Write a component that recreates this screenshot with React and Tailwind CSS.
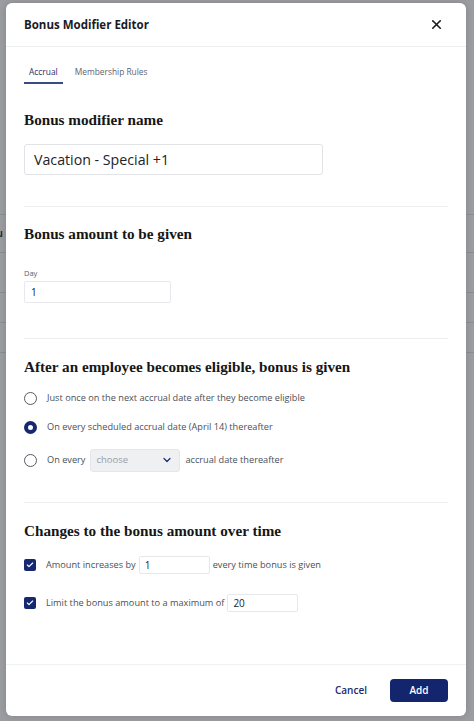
import { X, ChevronDown, Check } from 'lucide-react';

const sans = { fontFamily: '"Open Sans", "Noto Sans", sans-serif' };
const serif = { fontFamily: '"Liberation Serif", "DejaVu Serif", serif' };

function Radio({ checked }) {
  return checked ? (
    <span className="w-[13px] h-[13px] rounded-full border-[4px] border-[#16286f] bg-white shrink-0" />
  ) : (
    <span className="w-[13px] h-[13px] rounded-full border-[1.5px] border-[#555a62] bg-white shrink-0" />
  );
}

function Checkbox() {
  return (
    <span className="w-[12px] h-[12px] rounded-[2px] bg-[#16286f] flex items-center justify-center shrink-0">
      <Check size={8} strokeWidth={3.5} className="text-white" />
    </span>
  );
}

function Heading({ children, className = '' }) {
  return (
    <h2 style={serif} className={`text-[15.2px] leading-[20px] font-bold text-[#161616] ${className}`}>
      {children}
    </h2>
  );
}

export default function App() {
  return (
    <div className="relative w-[474px] h-[721px] bg-[#9b9ca0] overflow-hidden" style={sans}>
      {/* dimmed page behind the dialog */}
      <div className="pt-[214px] flex flex-col">
        <div className="h-[38px] border-t border-[#8c8d92] flex items-center text-[11px] font-semibold text-[#222]">
          <span className="-ml-[4px]">u</span>
        </div>
        <div className="h-[40px] border-t border-[#8c8d92]" />
        <div className="h-[30px] border-t border-[#8c8d92]" />
        <div className="h-[30px] border-t border-[#8c8d92]" />
        <div className="border-t border-[#8c8d92]" />
      </div>

      {/* dialog */}
      <div className="absolute left-[6px] top-[3px] w-[460px] h-[713px] bg-white rounded-[6px] flex flex-col shadow-[0_0_6px_rgba(0,0,0,0.15)]">
        <div className="h-[44px] border-b border-[#eceef0] flex items-center justify-between pl-[18px] pr-[22px]">
          <h1 className="text-[11.5px] font-bold text-[#1b1b1f]">Bonus Modifier Editor</h1>
          <X size={15} strokeWidth={2.6} className="text-[#1b1b1f]" />
        </div>

        <div className="flex-1 px-[18px] flex flex-col">
          <div className="flex gap-[12px] pt-[18px] text-[8.4px] leading-[14px]">
            <div className="px-[5px] pb-[3px] border-b-2 border-[#3a4a85] text-[#1d2b6b] font-medium">Accrual</div>
            <div className="pb-[3px] text-[#5f6570] font-medium">Membership Rules</div>
          </div>

          <Heading className="mt-[26px]">Bonus modifier name</Heading>
          <div className="mt-[14px] w-[299px] h-[31px] border border-[#e1e3e6] rounded-[3px] flex items-center px-[9px] text-[14.2px] text-[#222327]">
            Vacation - Special +1
          </div>

          <div className="mt-[31px] border-t border-[#ebedef]" />

          <Heading className="mt-[17px]">Bonus amount to be given</Heading>
          <div className="mt-[24px] text-[7.5px] leading-[10px] text-[#5a5f68]">Day</div>
          <div className="mt-[3px] w-[147px] h-[22px] border border-[#e6e8eb] rounded-[2px] flex items-center px-[6px] text-[10px] text-[#222327]">
            1
          </div>

          <div className="mt-[35px] border-t border-[#ebedef]" />

          <Heading className="mt-[18px]">After an employee becomes eligible, bonus is given</Heading>
          <div className="mt-[13px] h-[16px] flex items-center gap-[10px] text-[9.2px] text-[#4a4f58]">
            <Radio />
            <span>Just once on the next accrual date after they become eligible</span>
          </div>
          <div className="mt-[13px] h-[16px] flex items-center gap-[10px] text-[9.2px] text-[#4a4f58]">
            <Radio checked />
            <span>On every scheduled accrual date (April 14) thereafter</span>
          </div>
          <div className="mt-[13px] h-[24px] flex items-center gap-[10px] text-[9.2px] text-[#4a4f58]">
            <Radio />
            <div className="flex items-center gap-[5px]">
              <span>On every</span>
              <div className="w-[90px] h-[23px] bg-[#eff0f2] border border-[#e4e6e9] rounded-[3px] flex items-center justify-between pl-[5px] pr-[6px]">
                <span className="text-[#9a9ea6] text-[9.5px]">choose</span>
                <ChevronDown size={12} strokeWidth={2.4} className="text-[#1d2b6b]" />
              </div>
              <span>accrual date thereafter</span>
            </div>
          </div>

          <div className="mt-[30px] border-t border-[#ebedef]" />

          <Heading className="mt-[18px]">Changes to the bonus amount over time</Heading>
          <div className="mt-[15px] h-[18px] flex items-center gap-[10px] text-[9.2px] text-[#4a4f58]">
            <Checkbox />
            <div className="flex items-center gap-[3px]">
              <span>Amount increases by</span>
              <div className="w-[71px] h-[18px] border border-[#e6e8eb] rounded-[2px] flex items-center px-[5px] text-[10px] text-[#222327]">
                1
              </div>
              <span>every time bonus is given</span>
            </div>
          </div>
          <div className="mt-[20px] h-[18px] flex items-center gap-[10px] text-[9.2px] text-[#4a4f58]">
            <Checkbox />
            <div className="flex items-center gap-[3px]">
              <span>Limit the bonus amount to a maximum of</span>
              <div className="w-[71px] h-[18px] border border-[#e6e8eb] rounded-[2px] flex items-center px-[5px] text-[10px] text-[#222327]">
                20
              </div>
            </div>
          </div>
        </div>

        <div className="h-[52px] border-t border-[#f0f1f3] flex items-center justify-end gap-[23px] pr-[18px]">
          <button className="text-[10px] font-semibold text-[#1d2b6b]">Cancel</button>
          <button className="w-[58px] h-[23px] rounded-[4px] bg-[#13256c] text-white text-[10px] font-semibold">Add</button>
        </div>
      </div>
    </div>
  );
}
